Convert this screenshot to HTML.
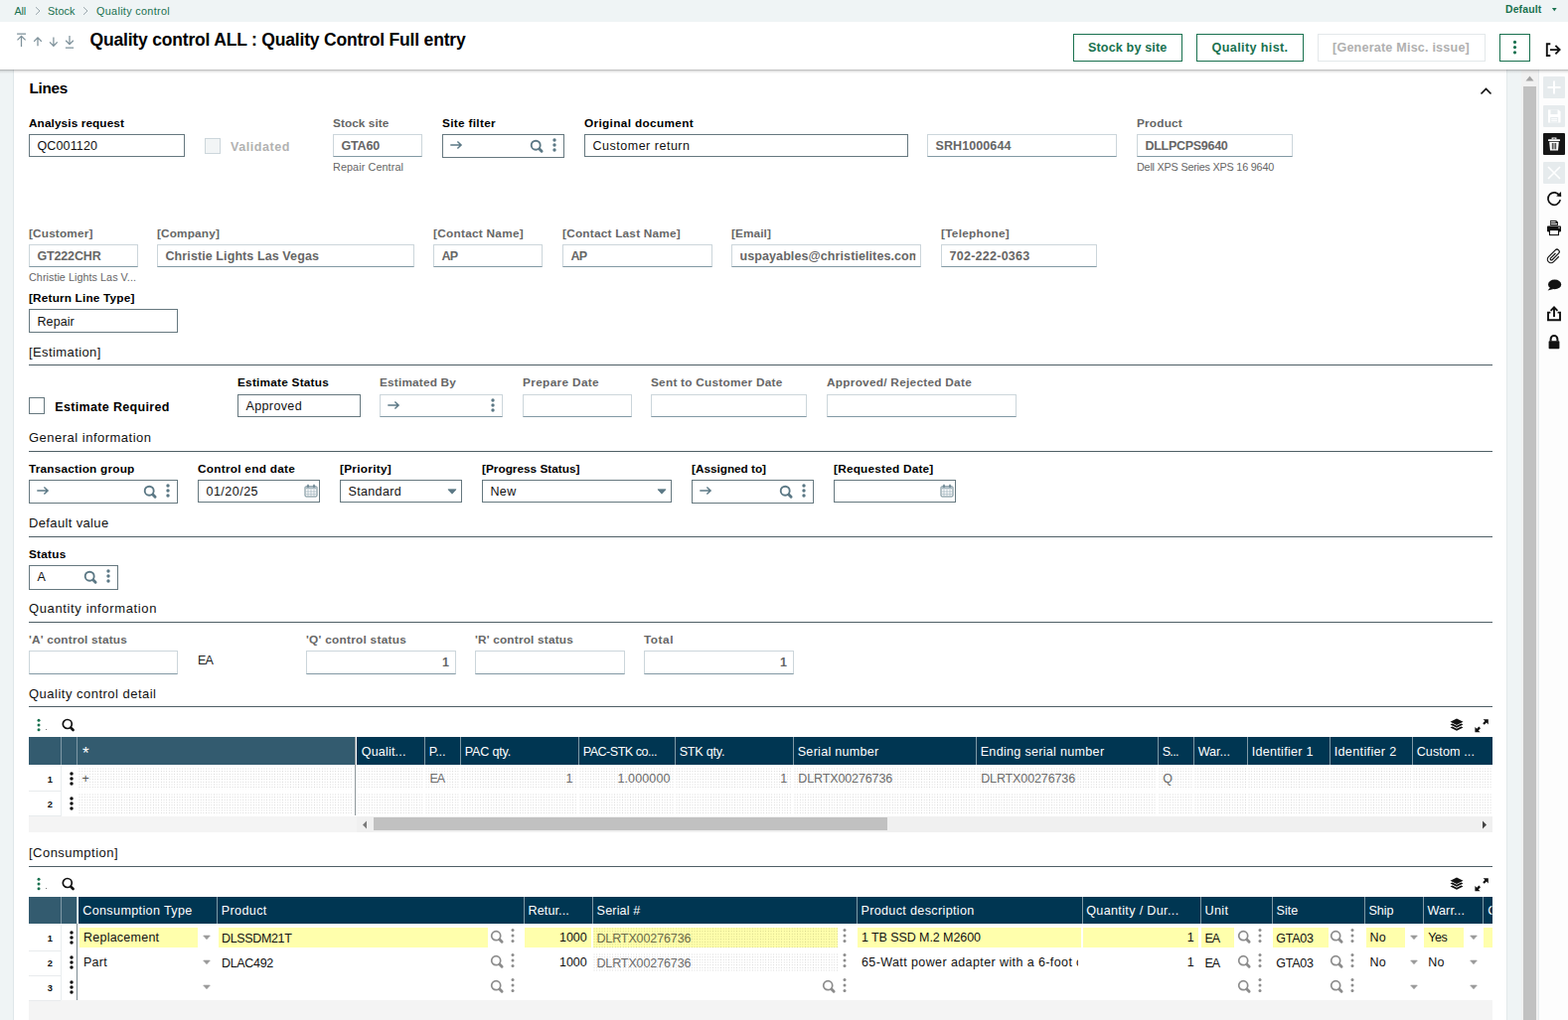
<!DOCTYPE html>
<html lang="en"><head><meta charset="utf-8"><title>Quality control</title>
<style>
html,body{margin:0;padding:0;background:#fff;}
body{width:1578px;height:1027px;overflow:hidden;font-family:"Liberation Sans",sans-serif;}
#root{position:relative;width:1578px;height:1027px;overflow:hidden;background:#fff;}
.w{display:contents;}
.b{position:absolute;box-sizing:border-box;}
.t{position:absolute;white-space:nowrap;}
.ed{border:1px solid #66787f;background:#fff;}
.ro{border:1px solid #ccd6db;border-bottom-color:#8299a4;background:#fff;}
.dots{background-color:#fff;background-image:linear-gradient(90deg,#fff 1.67px,rgba(255,255,255,0) 1.67px),linear-gradient(#fff 1.67px,#d0d0d0 1.67px);background-size:2.667px 2.667px;background-position:-1.2px -1.2px;}

</style></head>
<body>
<div id="root">
<nav class="w" aria-label="Breadcrumb">
<div class="b " style="left:0px;top:0px;width:1578px;height:22px;background:#eff4f5;"></div>
<span class="t " style="top:5px;font-size:10.8px;line-height:12px;color:#19714f;left:14.50px;letter-spacing:-0.167px;">All</span>
<span class="t " style="top:5px;font-size:10.8px;line-height:12px;color:#19714f;left:48.00px;letter-spacing:0.097px;">Stock</span>
<span class="t " style="top:5px;font-size:10.8px;line-height:12px;color:#19714f;left:97.00px;letter-spacing:0.332px;">Quality control</span>
<svg class="b" style="left:34px;top:6px;" width="8" height="10" viewBox="0 0 8 10"><path d="M2 1.2 L6 5 L2 8.8" fill="none" stroke="#9aa7ad" stroke-width="1"/></svg>
<svg class="b" style="left:82px;top:6px;" width="8" height="10" viewBox="0 0 8 10"><path d="M2 1.2 L6 5 L2 8.8" fill="none" stroke="#9aa7ad" stroke-width="1"/></svg>
<span class="t " style="top:4px;font-size:10.4px;line-height:11px;color:#19714f;font-weight:700;left:1515.00px;letter-spacing:0.154px;">Default</span>
<svg class="b" style="left:1561px;top:7px;" width="7" height="6" viewBox="0 0 7 6"><path d="M0.9 0.9 H5.7 L3.3 4.3 Z" fill="#19714f"/></svg>
</nav>
<div class="w">
<div class="b " style="left:0px;top:70px;width:14px;height:957px;background:#eff4f5;border-right:1px solid #dfe6e9;"></div>
<div class="b " style="left:1516px;top:70px;width:15px;height:957px;background:#eff4f5;border-left:1px solid #e3e9eb;"></div>
<div class="b " style="left:1531px;top:70px;width:17px;height:957px;background:#f1f1f1;"></div>
<div class="b " style="left:1533px;top:87px;width:13px;height:940px;background:#c1c1c1;"></div>
<svg class="b" style="left:1535px;top:76px;" width="9" height="6" viewBox="0 0 9 6"><path d="M0.5 5.5 L4.5 0.5 L8.5 5.5 Z" fill="#a3a3a3"/></svg>
<div class="b " style="left:1548px;top:70px;width:30px;height:957px;background:#fdfdfd;border-left:1px solid #e6ebed;"></div>
</div>
<header class="w">
<div class="b " style="left:0px;top:22px;width:1578px;height:48px;background:#fff;"></div>
<div class="b " style="left:0px;top:70px;width:1578px;height:4px;background:linear-gradient(rgba(0,0,0,0.30),rgba(0,0,0,0.10) 40%,rgba(0,0,0,0));"></div>
<svg class="b" style="left:14px;top:32px;" width="64" height="18" viewBox="0 0 64 18"><g stroke="#7f929b" stroke-width="1.25" fill="none"><path d="M3.1 2.2 H12 M7.5 4.3 V14.9 M3.5 8.4 L7.5 4.3 L11.6 8.4"/><path d="M24 5.9 V14.3 M20.2 9.8 L24 5.9 L27.8 9.8"/><path d="M39.9 5.4 V14.2 M36 10.4 L39.9 14.3 L43.7 10.4"/><path d="M51.9 16.2 H60.1 M56 4.1 V12.4 M52.2 8.7 L56 12.6 L59.8 8.7"/></g></svg>
<span class="t " style="top:30px;font-size:17.5px;line-height:20px;color:#000;font-weight:700;left:90.50px;letter-spacing:-0.187px;">Quality control ALL : Quality Control Full entry</span>
<div class="b " style="left:1080px;top:34px;width:110px;height:28px;border:1.5px solid #19714f;background:#fff;"></div>
<span class="t " style="top:41px;font-size:12.6px;line-height:14px;color:#19714f;font-weight:700;left:1095.00px;letter-spacing:0.138px;">Stock by site</span>
<div class="b " style="left:1204px;top:34px;width:108px;height:28px;border:1.5px solid #19714f;background:#fff;"></div>
<span class="t " style="top:41px;font-size:12.6px;line-height:14px;color:#19714f;font-weight:700;left:1219.50px;letter-spacing:0.379px;">Quality hist.</span>
<div class="b " style="left:1326px;top:34px;width:169px;height:28px;border:1px solid #e3e8ea;background:#fff;"></div>
<span class="t " style="top:41px;font-size:12.6px;line-height:14px;color:#b0b0b0;font-weight:700;left:1341.00px;letter-spacing:0.196px;">[Generate Misc. issue]</span>
<div class="b " style="left:1509px;top:34px;width:31px;height:28px;border:1.5px solid #19714f;background:#fff;"></div>
<svg class="b" style="left:1522px;top:40px;" width="5" height="16" viewBox="0 0 5 16"><g fill="#19714f"><circle cx="2.5" cy="2.4" r="1.6"/><circle cx="2.5" cy="7.6" r="1.6"/><circle cx="2.5" cy="12.8" r="1.6"/></g></svg>
<svg class="b" style="left:1554px;top:41px;" width="18" height="18" viewBox="0 0 18 18"><g fill="none" stroke="#111" stroke-width="1.9"><path d="M6.3 3.2 H2.8 V15 H6.3"/><path d="M6 9.1 H15.3 M11.4 4.9 L15.6 9.1 L11.4 13.3"/></g></svg>
</header>
<aside class="w">
<div class="b " style="left:1553px;top:77px;width:22px;height:22px;background:#e6ebed;border-radius:1px;"></div>
<svg class="b" style="left:1553px;top:77px;" width="22" height="22" viewBox="0 0 22 22"><path d="M11 4.5 V17.5 M4.5 11 H17.5" stroke="#fff" stroke-width="2" fill="none"/></svg>
<div class="b " style="left:1553px;top:106px;width:22px;height:22px;background:#e6ebed;border-radius:1px;"></div>
<svg class="b" style="left:1553px;top:106px;" width="22" height="22" viewBox="0 0 22 22"><path d="M5 4.5 H15.5 L17.5 6.5 V17.5 H5 Z" fill="#fff"/><rect x="7.5" y="4.5" width="7" height="4.6" fill="#e6ebed"/><rect x="7.2" y="12" width="8" height="5.5" fill="#e6ebed"/><rect x="8.2" y="13.2" width="6" height="1.1" fill="#fff"/><rect x="8.2" y="15.2" width="6" height="1.1" fill="#fff"/></svg>
<div class="b " style="left:1553px;top:134px;width:22px;height:22px;background:#161616;border-radius:1px;"></div>
<svg class="b" style="left:1553px;top:134px;" width="22" height="22" viewBox="0 0 22 22"><g fill="#fff"><rect x="5" y="6.2" width="12" height="1.8" rx="0.5"/><path d="M8.6 6.3 V4.6 H13.4 V6.3 H12.3 V5.6 H9.7 V6.3 Z"/><path d="M6.2 8.8 H15.8 L15 17.6 H7 Z"/></g><g stroke="#161616" stroke-width="0.9"><path d="M9.3 10 V16.3 M11 10 V16.3 M12.7 10 V16.3"/></g></svg>
<div class="b " style="left:1553px;top:163px;width:22px;height:22px;background:#e6ebed;border-radius:1px;"></div>
<svg class="b" style="left:1553px;top:163px;" width="22" height="22" viewBox="0 0 22 22"><path d="M5 5 L17 17 M17 5 L5 17" stroke="#fff" stroke-width="1.6" fill="none"/></svg>
<svg class="b" style="left:1553px;top:189px;" width="22" height="22" viewBox="0 0 22 22"><path d="M16.6 8.2 A6.2 6.2 0 1 0 17.2 12.2" fill="none" stroke="#111" stroke-width="1.7"/><path d="M13.2 8.6 L18.2 9 L18 4 Z" fill="#111"/></svg>
<svg class="b" style="left:1553px;top:218px;" width="22" height="22" viewBox="0 0 22 22"><g fill="#111"><path d="M7 4 H13.2 L15 5.8 V9 H7 Z"/><rect x="4" y="9.4" width="14" height="6" rx="0.8"/><rect x="6.5" y="13.6" width="9" height="5" fill="#fff" stroke="#111" stroke-width="1.1"/></g><rect x="7.6" y="5" width="5" height="1" fill="#fff"/><rect x="7.6" y="7" width="6.6" height="1" fill="#fff"/><circle cx="16" cy="11.3" r="0.7" fill="#fff"/></svg>
<svg class="b" style="left:1553px;top:247px;" width="22" height="22" viewBox="0 0 22 22"><path d="M9.9 7.4 V14.4 A1.15 1.15 0 0 0 12.2 14.4 V5.4 A2.35 2.35 0 0 0 7.5 5.4 V15 A3.55 3.55 0 0 0 14.6 15 V7.4" fill="none" stroke="#1c1c1c" stroke-width="1.25" transform="rotate(45 11 11) translate(0 0.4)"/></svg>
<svg class="b" style="left:1553px;top:276px;" width="22" height="22" viewBox="0 0 22 22"><ellipse cx="11.6" cy="10.4" rx="6.6" ry="4.9" fill="#111"/><path d="M7.5 13 L4.6 16.6 L10.5 15 Z" fill="#111"/></svg>
<svg class="b" style="left:1553px;top:305px;" width="22" height="22" viewBox="0 0 22 22"><g fill="none" stroke="#111" stroke-width="1.9"><path d="M7.4 9.6 H5 V17.2 H17 V9.6 H14.6"/><path d="M11 14 V4.6 M7.6 7.8 L11 4.4 L14.4 7.8"/></g></svg>
<svg class="b" style="left:1553px;top:333px;" width="22" height="22" viewBox="0 0 22 22"><path d="M7.6 10.5 V8.4 A3.4 3.4 0 0 1 14.4 8.4 V10.5" fill="none" stroke="#111" stroke-width="2"/><rect x="5.6" y="10.2" width="10.8" height="8" rx="0.8" fill="#111"/></svg>
</aside>
<main class="w">
<span class="t " style="top:80px;font-size:15.3px;line-height:17px;color:#000;font-weight:700;left:29.50px;letter-spacing:-0.291px;">Lines</span>
<svg class="b" style="left:1488px;top:86px;" width="15" height="11" viewBox="0 0 15 11"><path d="M2.5 8.5 L7.5 3.5 L12.5 8.5" fill="none" stroke="#111" stroke-width="1.6"/></svg>
<div class="b ed" style="left:29px;top:135px;width:157px;height:23px;"></div>
<span class="t " style="top:117px;font-size:11.8px;line-height:14px;color:#000;font-weight:700;left:29.00px;letter-spacing:0.099px;">Analysis request</span>
<span class="t " style="top:140px;font-size:12.5px;line-height:14px;color:#111;left:37.50px;letter-spacing:0.132px;">QC001120</span>
<div class="b " style="left:206px;top:139px;width:16px;height:16px;border:1px solid #ccd6db;background:#f2f5f6;"></div>
<span class="t " style="top:141px;font-size:12.5px;line-height:14px;color:#b2b2b2;font-weight:700;left:232.00px;letter-spacing:0.568px;">Validated</span>
<div class="b ro" style="left:335px;top:135px;width:90px;height:23px;"></div>
<span class="t " style="top:117px;font-size:11.8px;line-height:14px;color:#666;font-weight:700;left:335.00px;letter-spacing:0.077px;">Stock site</span>
<span class="t " style="top:140px;font-size:12.5px;line-height:14px;color:#666;font-weight:700;left:343.50px;letter-spacing:-0.175px;">GTA60</span>
<span class="t " style="top:162px;font-size:10.8px;line-height:12px;color:#666;left:335.00px;letter-spacing:0.098px;">Repair Central</span>
<div class="b ed" style="left:445px;top:135px;width:123px;height:24px;"></div>
<span class="t " style="top:117px;font-size:11.8px;line-height:14px;color:#000;font-weight:700;left:445.00px;letter-spacing:0.320px;">Site filter</span>
<svg class="b" style="left:452.5px;top:141.3px;" width="13" height="10" viewBox="0 0 13 10"><path d="M0.3 5 H11 M7.4 1.5 L11.1 5 L7.4 8.5" fill="none" stroke="#5b7885" stroke-width="1.45"/></svg>
<svg class="b" style="left:531.6px;top:138.9px;" width="16" height="16" viewBox="0 0 16 16"><circle cx="7.2" cy="7.2" r="4.5" fill="none" stroke="#5b7885" stroke-width="1.85"/><path d="M10.9 11 L13.1 13.2" stroke="#5b7885" stroke-width="2.9" stroke-linecap="round"/></svg>
<svg class="b" style="left:555.4px;top:138.3px;" width="6" height="16" viewBox="0 0 6 16"><g fill="#5b7885"><circle cx="3" cy="3.05" r="1.7"/><circle cx="3" cy="8" r="1.7"/><circle cx="3" cy="12.95" r="1.7"/></g></svg>
<div class="b ed" style="left:588px;top:135px;width:326px;height:23px;"></div>
<span class="t " style="top:117px;font-size:11.8px;line-height:14px;color:#000;font-weight:700;left:588.00px;letter-spacing:0.340px;">Original document</span>
<span class="t " style="top:140px;font-size:12.5px;line-height:14px;color:#111;left:596.50px;letter-spacing:0.512px;">Customer return</span>
<div class="b ro" style="left:933px;top:135px;width:191px;height:23px;"></div>
<span class="t " style="top:140px;font-size:12.5px;line-height:14px;color:#666;font-weight:700;left:941.50px;letter-spacing:0.094px;">SRH1000644</span>
<div class="b ro" style="left:1144px;top:135px;width:157px;height:23px;"></div>
<span class="t " style="top:117px;font-size:11.8px;line-height:14px;color:#666;font-weight:700;left:1144.00px;letter-spacing:0.203px;">Product</span>
<span class="t " style="top:140px;font-size:12.5px;line-height:14px;color:#666;font-weight:700;left:1152.50px;letter-spacing:-0.287px;">DLLPCPS9640</span>
<span class="t " style="top:162px;font-size:10.8px;line-height:12px;color:#666;left:1144.00px;letter-spacing:-0.202px;">Dell XPS Series XPS 16 9640</span>
<div class="b ro" style="left:29px;top:246px;width:110px;height:23px;"></div>
<span class="t " style="top:228px;font-size:11.8px;line-height:14px;color:#666;font-weight:700;left:29.00px;letter-spacing:0.158px;">[Customer]</span>
<span class="t " style="top:251px;font-size:12.5px;line-height:14px;color:#666;font-weight:700;left:37.50px;letter-spacing:-0.162px;">GT222CHR</span>
<span class="t " style="top:273px;font-size:10.8px;line-height:12px;color:#666;left:29.00px;letter-spacing:0.040px;">Christie Lights Las V...</span>
<div class="b ro" style="left:158px;top:246px;width:259px;height:23px;"></div>
<span class="t " style="top:228px;font-size:11.8px;line-height:14px;color:#666;font-weight:700;left:158.00px;letter-spacing:0.155px;">[Company]</span>
<span class="t " style="top:251px;font-size:12.5px;line-height:14px;color:#666;font-weight:700;left:166.50px;letter-spacing:0.094px;">Christie Lights Las Vegas</span>
<div class="b ro" style="left:436px;top:246px;width:110px;height:23px;"></div>
<span class="t " style="top:228px;font-size:11.8px;line-height:14px;color:#666;font-weight:700;left:436.00px;letter-spacing:0.272px;">[Contact Name]</span>
<span class="t " style="top:251px;font-size:12.5px;line-height:14px;color:#666;font-weight:700;left:444.50px;letter-spacing:-0.688px;">AP</span>
<div class="b ro" style="left:566px;top:246px;width:151px;height:23px;"></div>
<span class="t " style="top:228px;font-size:11.8px;line-height:14px;color:#666;font-weight:700;left:566.00px;letter-spacing:0.225px;">[Contact Last Name]</span>
<span class="t " style="top:251px;font-size:12.5px;line-height:14px;color:#666;font-weight:700;left:574.50px;letter-spacing:-0.688px;">AP</span>
<div class="b ro" style="left:736px;top:246px;width:191px;height:23px;"></div>
<span class="t " style="top:228px;font-size:11.8px;line-height:14px;color:#666;font-weight:700;left:736.00px;letter-spacing:0.094px;">[Email]</span>
<span class="t " style="top:251px;font-size:12.5px;line-height:14px;color:#666;font-weight:700;left:744.50px;letter-spacing:0.092px;clip-path:inset(-2px 4.6px -2px 0);">uspayables@christielites.com</span>
<div class="b ro" style="left:947px;top:246px;width:157px;height:23px;"></div>
<span class="t " style="top:228px;font-size:11.8px;line-height:14px;color:#666;font-weight:700;left:947.00px;letter-spacing:0.274px;">[Telephone]</span>
<span class="t " style="top:251px;font-size:12.5px;line-height:14px;color:#666;font-weight:700;left:955.50px;letter-spacing:0.262px;">702-222-0363</span>
<div class="b ed" style="left:29px;top:311px;width:150px;height:24px;"></div>
<span class="t " style="top:293px;font-size:11.8px;line-height:14px;color:#000;font-weight:700;left:29.00px;letter-spacing:0.175px;">[Return Line Type]</span>
<span class="t " style="top:317px;font-size:12.5px;line-height:14px;color:#111;left:37.50px;letter-spacing:0.079px;">Repair</span>
<span class="t " style="top:347px;font-size:13px;line-height:15px;color:#111;left:29.00px;letter-spacing:0.398px;">[Estimation]</span>
<div class="b " style="left:29px;top:367px;width:1473px;height:1px;background:#4f5f66;"></div>
<div class="b " style="left:29px;top:400px;width:16px;height:17px;border:1px solid #66787f;background:#fff;"></div>
<span class="t " style="top:403px;font-size:12.5px;line-height:14px;color:#000;font-weight:700;left:55.30px;letter-spacing:0.337px;">Estimate Required</span>
<div class="b ed" style="left:239px;top:397px;width:124px;height:23px;"></div>
<span class="t " style="top:378px;font-size:11.8px;line-height:14px;color:#000;font-weight:700;left:239.00px;letter-spacing:0.232px;">Estimate Status</span>
<span class="t " style="top:402px;font-size:12.5px;line-height:14px;color:#111;left:247.50px;letter-spacing:0.373px;">Approved</span>
<div class="b ro" style="left:382px;top:397px;width:124px;height:23px;"></div>
<span class="t " style="top:378px;font-size:11.8px;line-height:14px;color:#666;font-weight:700;left:382.00px;letter-spacing:0.188px;">Estimated By</span>
<svg class="b" style="left:389.5px;top:403.3px;" width="13" height="10" viewBox="0 0 13 10"><path d="M0.3 5 H11 M7.4 1.5 L11.1 5 L7.4 8.5" fill="none" stroke="#5b7885" stroke-width="1.45"/></svg>
<svg class="b" style="left:493.4px;top:400.3px;" width="6" height="16" viewBox="0 0 6 16"><g fill="#5b7885"><circle cx="3" cy="3.05" r="1.7"/><circle cx="3" cy="8" r="1.7"/><circle cx="3" cy="12.95" r="1.7"/></g></svg>
<div class="b ro" style="left:526px;top:397px;width:110px;height:23px;"></div>
<span class="t " style="top:378px;font-size:11.8px;line-height:14px;color:#666;font-weight:700;left:526.00px;letter-spacing:0.350px;">Prepare Date</span>
<div class="b ro" style="left:655px;top:397px;width:157px;height:23px;"></div>
<span class="t " style="top:378px;font-size:11.8px;line-height:14px;color:#666;font-weight:700;left:655.00px;letter-spacing:0.254px;">Sent to Customer Date</span>
<div class="b ro" style="left:832px;top:397px;width:191px;height:23px;"></div>
<span class="t " style="top:378px;font-size:11.8px;line-height:14px;color:#666;font-weight:700;left:832.00px;letter-spacing:0.276px;">Approved/ Rejected Date</span>
<span class="t " style="top:433px;font-size:13px;line-height:15px;color:#111;left:29.00px;letter-spacing:0.491px;">General information</span>
<div class="b " style="left:29px;top:454px;width:1473px;height:1px;background:#4f5f66;"></div>
<div class="b ed" style="left:29px;top:483px;width:150px;height:24px;"></div>
<span class="t " style="top:465px;font-size:11.8px;line-height:14px;color:#000;font-weight:700;left:29.00px;letter-spacing:0.211px;">Transaction group</span>
<svg class="b" style="left:36.5px;top:489.3px;" width="13" height="10" viewBox="0 0 13 10"><path d="M0.3 5 H11 M7.4 1.5 L11.1 5 L7.4 8.5" fill="none" stroke="#5b7885" stroke-width="1.45"/></svg>
<svg class="b" style="left:142.6px;top:486.90000000000003px;" width="16" height="16" viewBox="0 0 16 16"><circle cx="7.2" cy="7.2" r="4.5" fill="none" stroke="#5b7885" stroke-width="1.85"/><path d="M10.9 11 L13.1 13.2" stroke="#5b7885" stroke-width="2.9" stroke-linecap="round"/></svg>
<svg class="b" style="left:166.4px;top:486.3px;" width="6" height="16" viewBox="0 0 6 16"><g fill="#5b7885"><circle cx="3" cy="3.05" r="1.7"/><circle cx="3" cy="8" r="1.7"/><circle cx="3" cy="12.95" r="1.7"/></g></svg>
<div class="b ed" style="left:199px;top:483px;width:123px;height:23px;"></div>
<span class="t " style="top:465px;font-size:11.8px;line-height:14px;color:#000;font-weight:700;left:199.00px;letter-spacing:0.268px;">Control end date</span>
<span class="t " style="top:488px;font-size:12.5px;line-height:14px;color:#111;left:207.50px;letter-spacing:0.479px;">01/20/25</span>
<svg class="b" style="left:305.5px;top:487.3px;" width="14" height="14" viewBox="0 0 14 14"><rect x="1" y="2.8" width="12" height="10.2" rx="1" fill="#fff" stroke="#5b7885" stroke-width="0.9"/><rect x="1.4" y="3.2" width="11.2" height="2.2" fill="#a9bac2"/><path d="M4 0.8 V3.8 M10 0.8 V3.8" stroke="#5b7885" stroke-width="1.4"/><path d="M1.5 8 H12.5 M1.5 10.5 H12.5 M4 5.6 V12.6 M7 5.6 V12.6 M10 5.6 V12.6" stroke="#9fb2bb" stroke-width="0.7"/></svg>
<div class="b ed" style="left:342px;top:483px;width:123px;height:23px;"></div>
<span class="t " style="top:465px;font-size:11.8px;line-height:14px;color:#000;font-weight:700;left:342.00px;letter-spacing:0.283px;">[Priority]</span>
<span class="t " style="top:488px;font-size:12.5px;line-height:14px;color:#111;left:350.50px;letter-spacing:0.346px;">Standard</span>
<svg class="b" style="left:450px;top:491.7px;" width="10" height="6" viewBox="0 0 10 6"><path d="M1 0.8 H9 L5 5.2 Z" fill="#5b7885" stroke="#5b7885" stroke-width="0.8" stroke-linejoin="round"/></svg>
<div class="b ed" style="left:485px;top:483px;width:191px;height:23px;"></div>
<span class="t " style="top:465px;font-size:11.8px;line-height:14px;color:#000;font-weight:700;left:485.00px;letter-spacing:0.009px;">[Progress Status]</span>
<span class="t " style="top:488px;font-size:12.5px;line-height:14px;color:#111;left:493.50px;letter-spacing:0.328px;">New</span>
<svg class="b" style="left:661px;top:491.7px;" width="10" height="6" viewBox="0 0 10 6"><path d="M1 0.8 H9 L5 5.2 Z" fill="#5b7885" stroke="#5b7885" stroke-width="0.8" stroke-linejoin="round"/></svg>
<div class="b ed" style="left:696px;top:483px;width:123px;height:24px;"></div>
<span class="t " style="top:465px;font-size:11.8px;line-height:14px;color:#000;font-weight:700;left:696.00px;letter-spacing:-0.029px;">[Assigned to]</span>
<svg class="b" style="left:703.5px;top:489.3px;" width="13" height="10" viewBox="0 0 13 10"><path d="M0.3 5 H11 M7.4 1.5 L11.1 5 L7.4 8.5" fill="none" stroke="#5b7885" stroke-width="1.45"/></svg>
<svg class="b" style="left:782.6px;top:486.90000000000003px;" width="16" height="16" viewBox="0 0 16 16"><circle cx="7.2" cy="7.2" r="4.5" fill="none" stroke="#5b7885" stroke-width="1.85"/><path d="M10.9 11 L13.1 13.2" stroke="#5b7885" stroke-width="2.9" stroke-linecap="round"/></svg>
<svg class="b" style="left:806.4px;top:486.3px;" width="6" height="16" viewBox="0 0 6 16"><g fill="#5b7885"><circle cx="3" cy="3.05" r="1.7"/><circle cx="3" cy="8" r="1.7"/><circle cx="3" cy="12.95" r="1.7"/></g></svg>
<div class="b ed" style="left:839px;top:483px;width:123px;height:23px;"></div>
<span class="t " style="top:465px;font-size:11.8px;line-height:14px;color:#000;font-weight:700;left:839.00px;letter-spacing:0.218px;">[Requested Date]</span>
<svg class="b" style="left:945.5px;top:487.3px;" width="14" height="14" viewBox="0 0 14 14"><rect x="1" y="2.8" width="12" height="10.2" rx="1" fill="#fff" stroke="#5b7885" stroke-width="0.9"/><rect x="1.4" y="3.2" width="11.2" height="2.2" fill="#a9bac2"/><path d="M4 0.8 V3.8 M10 0.8 V3.8" stroke="#5b7885" stroke-width="1.4"/><path d="M1.5 8 H12.5 M1.5 10.5 H12.5 M4 5.6 V12.6 M7 5.6 V12.6 M10 5.6 V12.6" stroke="#9fb2bb" stroke-width="0.7"/></svg>
<span class="t " style="top:519px;font-size:13px;line-height:15px;color:#111;left:29.00px;letter-spacing:0.355px;">Default value</span>
<div class="b " style="left:29px;top:540px;width:1473px;height:1px;background:#4f5f66;"></div>
<div class="b ed" style="left:29px;top:569px;width:90px;height:25px;"></div>
<span class="t " style="top:551px;font-size:11.8px;line-height:14px;color:#000;font-weight:700;left:29.00px;letter-spacing:0.240px;">Status</span>
<span class="t " style="top:574px;font-size:12.5px;line-height:14px;color:#111;left:37.50px;letter-spacing:0.156px;">A</span>
<svg class="b" style="left:82.6px;top:572.9px;" width="16" height="16" viewBox="0 0 16 16"><circle cx="7.2" cy="7.2" r="4.5" fill="none" stroke="#5b7885" stroke-width="1.85"/><path d="M10.9 11 L13.1 13.2" stroke="#5b7885" stroke-width="2.9" stroke-linecap="round"/></svg>
<svg class="b" style="left:106.4px;top:572.3px;" width="6" height="16" viewBox="0 0 6 16"><g fill="#5b7885"><circle cx="3" cy="3.05" r="1.7"/><circle cx="3" cy="8" r="1.7"/><circle cx="3" cy="12.95" r="1.7"/></g></svg>
<span class="t " style="top:605px;font-size:13px;line-height:15px;color:#111;left:29.00px;letter-spacing:0.633px;">Quantity information</span>
<div class="b " style="left:29px;top:626px;width:1473px;height:1px;background:#4f5f66;"></div>
<div class="b ro" style="left:29px;top:655px;width:150px;height:24px;"></div>
<span class="t " style="top:637px;font-size:11.8px;line-height:14px;color:#666;font-weight:700;left:29.00px;letter-spacing:0.200px;">&#x27;A&#x27; control status</span>
<span class="t " style="top:658px;font-size:12.5px;line-height:14px;color:#222;left:199.00px;letter-spacing:-0.844px;">EA</span>
<div class="b ro" style="left:308px;top:655px;width:151px;height:24px;"></div>
<span class="t " style="top:637px;font-size:11.8px;line-height:14px;color:#666;font-weight:700;left:308.00px;letter-spacing:0.273px;">&#x27;Q&#x27; control status</span>
<span class="t " style="top:660px;font-size:12.5px;line-height:14px;color:#666;font-weight:700;right:1126.50px;letter-spacing:-0.380px;">1</span>
<div class="b ro" style="left:478px;top:655px;width:151px;height:24px;"></div>
<span class="t " style="top:637px;font-size:11.8px;line-height:14px;color:#666;font-weight:700;left:478.00px;letter-spacing:0.200px;">&#x27;R&#x27; control status</span>
<div class="b ro" style="left:648px;top:655px;width:151px;height:24px;"></div>
<span class="t " style="top:637px;font-size:11.8px;line-height:14px;color:#666;font-weight:700;left:648.00px;letter-spacing:0.537px;">Total</span>
<span class="t " style="top:660px;font-size:12.5px;line-height:14px;color:#666;font-weight:700;right:786.50px;letter-spacing:-0.380px;">1</span>
<span class="t " style="top:691px;font-size:13px;line-height:15px;color:#111;left:29.00px;letter-spacing:0.487px;">Quality control detail</span>
<div class="b " style="left:29px;top:711px;width:1473px;height:1px;background:#4f5f66;"></div>
<span class="t " style="top:851px;font-size:13px;line-height:15px;color:#111;left:29.00px;letter-spacing:0.475px;">[Consumption]</span>
<div class="b " style="left:29px;top:872px;width:1473px;height:1px;background:#4f5f66;"></div>
<svg class="b" style="left:36px;top:721.5px;" width="6" height="16" viewBox="0 0 6 16"><g fill="#19714f"><circle cx="3" cy="3.1500000000000004" r="1.5"/><circle cx="3" cy="8" r="1.5"/><circle cx="3" cy="12.85" r="1.5"/></g></svg>
<div class="b " style="left:45.5px;top:733.8px;width:1.0px;height:1.0px;background:#777;"></div>
<svg class="b" style="left:61px;top:721.5px;" width="16" height="16" viewBox="0 0 16 16"><circle cx="6.8" cy="7" r="4.5" fill="none" stroke="#111" stroke-width="1.7"/><path d="M10.2 10.6 L12.6 13" stroke="#111" stroke-width="2.6" stroke-linecap="round"/></svg>
<svg class="b" style="left:1458px;top:721.5px;" width="16" height="16" viewBox="0 0 16 16"><g fill="#111"><path d="M8 1.5 L14.5 4.7 L8 7.9 L1.5 4.7 Z"/><path d="M1.5 7.6 L3.6 6.6 L8 8.8 L12.4 6.6 L14.5 7.6 L8 10.8 Z"/><path d="M1.5 10.5 L3.6 9.5 L8 11.7 L12.4 9.5 L14.5 10.5 L8 13.7 Z"/></g></svg>
<svg class="b" style="left:1483px;top:722.5px;" width="16" height="16" viewBox="0 0 16 16"><g fill="#111"><path d="M9.6 1.2 H14.8 V6.4 L13 4.6 L10.8 6.8 L9.2 5.2 L11.4 3 Z"/><path d="M6.6 14.2 H1.4 V9 L3.2 10.8 L5.4 8.6 L7 10.2 L4.8 12.4 Z"/></g></svg>
<div class="b " style="left:29px;top:742px;width:328px;height:28px;background:#335b6f;"></div>
<div class="b " style="left:61px;top:742px;width:1px;height:28px;background:#7f99a6;"></div>
<div class="b " style="left:77px;top:742px;width:1px;height:28px;background:#7f99a6;"></div>
<div class="b " style="left:357px;top:742px;width:1px;height:79px;background:#8f989c;"></div>
<div class="b " style="left:359px;top:742px;width:1143px;height:28px;background:#003652;"></div>
<span class="t " style="top:749px;font-size:17px;line-height:19px;color:#fff;left:83.00px;letter-spacing:0.000px;">*</span>
<span class="t " style="top:750px;font-size:12.6px;line-height:14px;color:#fff;left:363.70px;letter-spacing:0.166px;">Qualit...</span>
<div class="b " style="left:427px;top:742px;width:1px;height:28px;background:#7f99a6;"></div>
<span class="t " style="top:750px;font-size:12.6px;line-height:14px;color:#fff;left:431.70px;letter-spacing:-0.195px;">P...</span>
<div class="b " style="left:463px;top:742px;width:1px;height:28px;background:#7f99a6;"></div>
<span class="t " style="top:750px;font-size:12.6px;line-height:14px;color:#fff;left:467.70px;letter-spacing:-0.179px;">PAC qty.</span>
<div class="b " style="left:582px;top:742px;width:1px;height:28px;background:#7f99a6;"></div>
<span class="t " style="top:750px;font-size:12.6px;line-height:14px;color:#fff;left:586.70px;letter-spacing:-0.512px;">PAC-STK co...</span>
<div class="b " style="left:679px;top:742px;width:1px;height:28px;background:#7f99a6;"></div>
<span class="t " style="top:750px;font-size:12.6px;line-height:14px;color:#fff;left:683.70px;letter-spacing:-0.220px;">STK qty.</span>
<div class="b " style="left:798px;top:742px;width:1px;height:28px;background:#7f99a6;"></div>
<span class="t " style="top:750px;font-size:12.6px;line-height:14px;color:#fff;left:802.70px;letter-spacing:0.269px;">Serial number</span>
<div class="b " style="left:982px;top:742px;width:1px;height:28px;background:#7f99a6;"></div>
<span class="t " style="top:750px;font-size:12.6px;line-height:14px;color:#fff;left:986.70px;letter-spacing:0.284px;">Ending serial number</span>
<div class="b " style="left:1165px;top:742px;width:1px;height:28px;background:#7f99a6;"></div>
<span class="t " style="top:750px;font-size:12.6px;line-height:14px;color:#fff;left:1169.70px;letter-spacing:-0.727px;">S...</span>
<div class="b " style="left:1201px;top:742px;width:1px;height:28px;background:#7f99a6;"></div>
<span class="t " style="top:750px;font-size:12.6px;line-height:14px;color:#fff;left:1205.70px;letter-spacing:-0.004px;">War...</span>
<div class="b " style="left:1255px;top:742px;width:1px;height:28px;background:#7f99a6;"></div>
<span class="t " style="top:750px;font-size:12.6px;line-height:14px;color:#fff;left:1259.70px;letter-spacing:0.274px;">Identifier 1</span>
<div class="b " style="left:1338px;top:742px;width:1px;height:28px;background:#7f99a6;"></div>
<span class="t " style="top:750px;font-size:12.6px;line-height:14px;color:#fff;left:1342.70px;letter-spacing:0.341px;">Identifier 2</span>
<div class="b " style="left:1421px;top:742px;width:1px;height:28px;background:#7f99a6;"></div>
<span class="t " style="top:750px;font-size:12.6px;line-height:14px;color:#fff;left:1425.70px;letter-spacing:0.091px;">Custom ...</span>
<div class="b dots" style="left:79px;top:773px;width:276px;height:22px;"></div>
<div class="b dots" style="left:360px;top:773px;width:65.5px;height:22px;"></div>
<div class="b dots" style="left:428px;top:773px;width:33.5px;height:22px;"></div>
<div class="b dots" style="left:464px;top:773px;width:116.5px;height:22px;"></div>
<div class="b dots" style="left:583px;top:773px;width:94.5px;height:22px;"></div>
<div class="b dots" style="left:680px;top:773px;width:116.5px;height:22px;"></div>
<div class="b dots" style="left:799px;top:773px;width:181.5px;height:22px;"></div>
<div class="b dots" style="left:983px;top:773px;width:180.5px;height:22px;"></div>
<div class="b dots" style="left:1166px;top:773px;width:33.5px;height:22px;"></div>
<div class="b dots" style="left:1202px;top:773px;width:51.5px;height:22px;"></div>
<div class="b dots" style="left:1256px;top:773px;width:80.5px;height:22px;"></div>
<div class="b dots" style="left:1339px;top:773px;width:80.5px;height:22px;"></div>
<div class="b dots" style="left:1422px;top:773px;width:78.5px;height:22px;"></div>
<div class="b dots" style="left:79px;top:799px;width:276px;height:22px;"></div>
<div class="b dots" style="left:360px;top:799px;width:65.5px;height:22px;"></div>
<div class="b dots" style="left:428px;top:799px;width:33.5px;height:22px;"></div>
<div class="b dots" style="left:464px;top:799px;width:116.5px;height:22px;"></div>
<div class="b dots" style="left:583px;top:799px;width:94.5px;height:22px;"></div>
<div class="b dots" style="left:680px;top:799px;width:116.5px;height:22px;"></div>
<div class="b dots" style="left:799px;top:799px;width:181.5px;height:22px;"></div>
<div class="b dots" style="left:983px;top:799px;width:180.5px;height:22px;"></div>
<div class="b dots" style="left:1166px;top:799px;width:33.5px;height:22px;"></div>
<div class="b dots" style="left:1202px;top:799px;width:51.5px;height:22px;"></div>
<div class="b dots" style="left:1256px;top:799px;width:80.5px;height:22px;"></div>
<div class="b dots" style="left:1339px;top:799px;width:80.5px;height:22px;"></div>
<div class="b dots" style="left:1422px;top:799px;width:78.5px;height:22px;"></div>
<div class="b " style="left:29px;top:796px;width:32px;height:1px;background:#e8ebed;"></div>
<div class="b " style="left:29px;top:821px;width:32px;height:1px;background:#e8ebed;"></div>
<div class="b " style="left:61px;top:770px;width:1px;height:52px;background:#eaedef;"></div>
<span class="t " style="top:780px;font-size:9.3px;line-height:10px;color:#111;font-weight:700;right:1525.00px;letter-spacing:0.000px;">1</span>
<span class="t " style="top:805px;font-size:9.3px;line-height:10px;color:#111;font-weight:700;right:1525.00px;letter-spacing:0.000px;">2</span>
<svg class="b" style="left:69px;top:775.9px;" width="6" height="16" viewBox="0 0 6 16"><g fill="#111"><circle cx="3" cy="3.0999999999999996" r="1.75"/><circle cx="3" cy="8" r="1.75"/><circle cx="3" cy="12.9" r="1.75"/></g></svg>
<svg class="b" style="left:69px;top:801.4px;" width="6" height="16" viewBox="0 0 6 16"><g fill="#111"><circle cx="3" cy="3.0999999999999996" r="1.75"/><circle cx="3" cy="8" r="1.75"/><circle cx="3" cy="12.9" r="1.75"/></g></svg>
<span class="t " style="top:777px;font-size:12.5px;line-height:14px;color:#555;left:82.50px;letter-spacing:0.000px;">+</span>
<span class="t " style="top:777px;font-size:12.5px;line-height:14px;color:#6b6b6b;left:432.40px;letter-spacing:-0.994px;">EA</span>
<span class="t " style="top:777px;font-size:12.5px;line-height:14px;color:#6b6b6b;right:1001.50px;letter-spacing:0.000px;">1</span>
<span class="t " style="top:777px;font-size:12.5px;line-height:14px;color:#6b6b6b;right:903.40px;letter-spacing:0.132px;">1.000000</span>
<span class="t " style="top:777px;font-size:12.5px;line-height:14px;color:#6b6b6b;right:785.70px;letter-spacing:0.000px;">1</span>
<span class="t " style="top:777px;font-size:12.5px;line-height:14px;color:#6b6b6b;left:803.30px;letter-spacing:-0.121px;">DLRTX00276736</span>
<span class="t " style="top:777px;font-size:12.5px;line-height:14px;color:#6b6b6b;left:987.20px;letter-spacing:-0.121px;">DLRTX00276736</span>
<span class="t " style="top:777px;font-size:12.5px;line-height:14px;color:#6b6b6b;left:1170.30px;letter-spacing:0.000px;">Q</span>
<div class="b " style="left:29px;top:822px;width:330px;height:16px;background:#f4f4f4;"></div>
<div class="b " style="left:359px;top:822px;width:1143px;height:16px;background:#f0f0f0;"></div>
<div class="b " style="left:376px;top:823px;width:517px;height:13px;background:#c1c1c1;"></div>
<svg class="b" style="left:364px;top:826px;" width="6" height="9" viewBox="0 0 6 9"><path d="M5 0.5 L1 4.5 L5 8.5 Z" fill="#7a7a7a"/></svg>
<svg class="b" style="left:1491px;top:826px;" width="6" height="9" viewBox="0 0 6 9"><path d="M1 0.5 L5 4.5 L1 8.5 Z" fill="#444"/></svg>
<svg class="b" style="left:36px;top:881.5px;" width="6" height="16" viewBox="0 0 6 16"><g fill="#19714f"><circle cx="3" cy="3.1500000000000004" r="1.5"/><circle cx="3" cy="8" r="1.5"/><circle cx="3" cy="12.85" r="1.5"/></g></svg>
<div class="b " style="left:45.5px;top:893.8px;width:1.0px;height:1.0px;background:#777;"></div>
<svg class="b" style="left:61px;top:881.5px;" width="16" height="16" viewBox="0 0 16 16"><circle cx="6.8" cy="7" r="4.5" fill="none" stroke="#111" stroke-width="1.7"/><path d="M10.2 10.6 L12.6 13" stroke="#111" stroke-width="2.6" stroke-linecap="round"/></svg>
<svg class="b" style="left:1458px;top:881.5px;" width="16" height="16" viewBox="0 0 16 16"><g fill="#111"><path d="M8 1.5 L14.5 4.7 L8 7.9 L1.5 4.7 Z"/><path d="M1.5 7.6 L3.6 6.6 L8 8.8 L12.4 6.6 L14.5 7.6 L8 10.8 Z"/><path d="M1.5 10.5 L3.6 9.5 L8 11.7 L12.4 9.5 L14.5 10.5 L8 13.7 Z"/></g></svg>
<svg class="b" style="left:1483px;top:882.5px;" width="16" height="16" viewBox="0 0 16 16"><g fill="#111"><path d="M9.6 1.2 H14.8 V6.4 L13 4.6 L10.8 6.8 L9.2 5.2 L11.4 3 Z"/><path d="M6.6 14.2 H1.4 V9 L3.2 10.8 L5.4 8.6 L7 10.2 L4.8 12.4 Z"/></g></svg>
<div class="b " style="left:29px;top:902.5px;width:49px;height:27.5px;background:#335b6f;"></div>
<div class="b " style="left:61px;top:902.5px;width:1px;height:27.5px;background:#7f99a6;"></div>
<div class="b " style="left:77.2px;top:902.5px;width:1.0999999999999943px;height:27.5px;background:#c5d0d6;"></div>
<div class="b " style="left:77.4px;top:930px;width:1.0px;height:77px;background:#7c8b92;"></div>
<div class="b " style="left:79px;top:902.5px;width:1423px;height:27.5px;background:#003652;"></div>
<span class="t " style="top:910px;font-size:12.6px;line-height:14px;color:#fff;left:83.20px;letter-spacing:0.357px;">Consumption Type</span>
<div class="b " style="left:218.0px;top:902.5px;width:1.0px;height:27.5px;background:#7f99a6;"></div>
<span class="t " style="top:910px;font-size:12.6px;line-height:14px;color:#fff;left:222.70px;letter-spacing:0.371px;">Product</span>
<div class="b " style="left:526.9px;top:902.5px;width:1.0px;height:27.5px;background:#7f99a6;"></div>
<span class="t " style="top:910px;font-size:12.6px;line-height:14px;color:#fff;left:531.60px;letter-spacing:0.086px;">Retur...</span>
<div class="b " style="left:595.9px;top:902.5px;width:1.0px;height:27.5px;background:#7f99a6;"></div>
<span class="t " style="top:910px;font-size:12.6px;line-height:14px;color:#fff;left:600.60px;letter-spacing:0.150px;">Serial #</span>
<div class="b " style="left:861.7px;top:902.5px;width:1.0px;height:27.5px;background:#7f99a6;"></div>
<span class="t " style="top:910px;font-size:12.6px;line-height:14px;color:#fff;left:866.40px;letter-spacing:0.341px;">Product description</span>
<div class="b " style="left:1088.5px;top:902.5px;width:1.0px;height:27.5px;background:#7f99a6;"></div>
<span class="t " style="top:910px;font-size:12.6px;line-height:14px;color:#fff;left:1093.20px;letter-spacing:0.341px;">Quantity / Dur...</span>
<div class="b " style="left:1207.7px;top:902.5px;width:1.0px;height:27.5px;background:#7f99a6;"></div>
<span class="t " style="top:910px;font-size:12.6px;line-height:14px;color:#fff;left:1212.40px;letter-spacing:0.398px;">Unit</span>
<div class="b " style="left:1279.8px;top:902.5px;width:1.0px;height:27.5px;background:#7f99a6;"></div>
<span class="t " style="top:910px;font-size:12.6px;line-height:14px;color:#fff;left:1284.50px;letter-spacing:-0.001px;">Site</span>
<div class="b " style="left:1372.8px;top:902.5px;width:1.0px;height:27.5px;background:#7f99a6;"></div>
<span class="t " style="top:910px;font-size:12.6px;line-height:14px;color:#fff;left:1377.50px;letter-spacing:-0.105px;">Ship</span>
<div class="b " style="left:1431.7px;top:902.5px;width:1.0px;height:27.5px;background:#7f99a6;"></div>
<span class="t " style="top:910px;font-size:12.6px;line-height:14px;color:#fff;left:1436.40px;letter-spacing:0.154px;">Warr...</span>
<div class="b " style="left:1492.4px;top:902.5px;width:1.0px;height:27.5px;background:#7f99a6;"></div>
<span class="t " style="top:910px;font-size:12.6px;line-height:14px;color:#fff;left:1497.20px;letter-spacing:0.000px;clip-path:inset(0 4.8px 0 0);">C</span>
<div class="b " style="left:29px;top:1007px;width:1473px;height:20px;background:#f4f4f4;"></div>
<div class="b " style="left:29px;top:957px;width:32px;height:1px;background:#e8ebed;"></div>
<div class="b " style="left:29px;top:982px;width:32px;height:1px;background:#e8ebed;"></div>
<div class="b " style="left:29px;top:1007px;width:32px;height:1px;background:#e8ebed;"></div>
<div class="b " style="left:61px;top:930px;width:1px;height:77px;background:#eaedef;"></div>
<span class="t " style="top:940px;font-size:9.3px;line-height:10px;color:#111;font-weight:700;right:1525.00px;letter-spacing:0.000px;">1</span>
<svg class="b" style="left:69px;top:936.4px;" width="6" height="16" viewBox="0 0 6 16"><g fill="#111"><circle cx="3" cy="3.0999999999999996" r="1.75"/><circle cx="3" cy="8" r="1.75"/><circle cx="3" cy="12.9" r="1.75"/></g></svg>
<span class="t " style="top:965px;font-size:9.3px;line-height:10px;color:#111;font-weight:700;right:1525.00px;letter-spacing:0.000px;">2</span>
<svg class="b" style="left:69px;top:961.4px;" width="6" height="16" viewBox="0 0 6 16"><g fill="#111"><circle cx="3" cy="3.0999999999999996" r="1.75"/><circle cx="3" cy="8" r="1.75"/><circle cx="3" cy="12.9" r="1.75"/></g></svg>
<span class="t " style="top:990px;font-size:9.3px;line-height:10px;color:#111;font-weight:700;right:1525.00px;letter-spacing:0.000px;">3</span>
<svg class="b" style="left:69px;top:986.4px;" width="6" height="16" viewBox="0 0 6 16"><g fill="#111"><circle cx="3" cy="3.0999999999999996" r="1.75"/><circle cx="3" cy="8" r="1.75"/><circle cx="3" cy="12.9" r="1.75"/></g></svg>
<div class="b " style="left:79.5px;top:934.2px;width:119.19999999999999px;height:19.59999999999991px;background:#ffffac;"></div>
<div class="b " style="left:219.5px;top:934.2px;width:271.1px;height:19.59999999999991px;background:#ffffac;"></div>
<div class="b " style="left:528.2px;top:934.2px;width:67.09999999999991px;height:19.59999999999991px;background:#ffffac;"></div>
<div class="b " style="left:863.2px;top:934.2px;width:224.5999999999999px;height:19.59999999999991px;background:#ffffac;"></div>
<div class="b " style="left:1090.3px;top:934.2px;width:115.90000000000009px;height:19.59999999999991px;background:#ffffac;"></div>
<div class="b " style="left:1208.7px;top:934.2px;width:33.799999999999955px;height:19.59999999999991px;background:#ffffac;"></div>
<div class="b " style="left:1281px;top:934.2px;width:55.799999999999955px;height:19.59999999999991px;background:#ffffac;"></div>
<div class="b " style="left:1374.5px;top:934.2px;width:39.5px;height:19.59999999999991px;background:#ffffac;"></div>
<div class="b " style="left:1433.3px;top:934.2px;width:39.5px;height:19.59999999999991px;background:#ffffac;"></div>
<div class="b " style="left:1493.2px;top:934.2px;width:8.799999999999955px;height:19.59999999999991px;background:#ffffac;"></div>
<div class="b dots" style="left:597px;top:934px;width:246px;height:20px;background-color:#ffffac;background-image:linear-gradient(90deg,#ffffac 1.67px,rgba(255,255,255,0) 1.67px),linear-gradient(#ffffac 1.67px,#cfcf86 1.67px);"></div>
<div class="b dots" style="left:597px;top:959.5px;width:246px;height:18.5px;"></div>
<svg class="b" style="left:203px;top:940.6px;" width="10" height="6" viewBox="0 0 10 6"><path d="M1.7 1.1 H8.3 L5 4.7 Z" fill="#9a9a9a" stroke="#9a9a9a" stroke-width="0.7" stroke-linejoin="round"/></svg>
<svg class="b" style="left:491.8px;top:935.2px;" width="16" height="16" viewBox="0 0 16 16"><circle cx="7.2" cy="7.2" r="4.5" fill="none" stroke="#8c8c8c" stroke-width="1.7"/><path d="M10.9 11 L13.1 13.2" stroke="#8c8c8c" stroke-width="2.9" stroke-linecap="round"/></svg>
<svg class="b" style="left:512.5px;top:934.4px;" width="6" height="16" viewBox="0 0 6 16"><g fill="#8c8c8c"><circle cx="3" cy="2.5999999999999996" r="1.5"/><circle cx="3" cy="8" r="1.5"/><circle cx="3" cy="13.4" r="1.5"/></g></svg>
<svg class="b" style="left:847px;top:934.4px;" width="6" height="16" viewBox="0 0 6 16"><g fill="#8c8c8c"><circle cx="3" cy="2.5999999999999996" r="1.5"/><circle cx="3" cy="8" r="1.5"/><circle cx="3" cy="13.4" r="1.5"/></g></svg>
<svg class="b" style="left:1244.1px;top:935.2px;" width="16" height="16" viewBox="0 0 16 16"><circle cx="7.2" cy="7.2" r="4.5" fill="none" stroke="#8c8c8c" stroke-width="1.7"/><path d="M10.9 11 L13.1 13.2" stroke="#8c8c8c" stroke-width="2.9" stroke-linecap="round"/></svg>
<svg class="b" style="left:1264.6px;top:934.4px;" width="6" height="16" viewBox="0 0 6 16"><g fill="#8c8c8c"><circle cx="3" cy="2.5999999999999996" r="1.5"/><circle cx="3" cy="8" r="1.5"/><circle cx="3" cy="13.4" r="1.5"/></g></svg>
<svg class="b" style="left:1337.3px;top:935.2px;" width="16" height="16" viewBox="0 0 16 16"><circle cx="7.2" cy="7.2" r="4.5" fill="none" stroke="#8c8c8c" stroke-width="1.7"/><path d="M10.9 11 L13.1 13.2" stroke="#8c8c8c" stroke-width="2.9" stroke-linecap="round"/></svg>
<svg class="b" style="left:1358.2px;top:934.4px;" width="6" height="16" viewBox="0 0 6 16"><g fill="#8c8c8c"><circle cx="3" cy="2.5999999999999996" r="1.5"/><circle cx="3" cy="8" r="1.5"/><circle cx="3" cy="13.4" r="1.5"/></g></svg>
<svg class="b" style="left:1418px;top:940.6px;" width="10" height="6" viewBox="0 0 10 6"><path d="M1.7 1.1 H8.3 L5 4.7 Z" fill="#9a9a9a" stroke="#9a9a9a" stroke-width="0.7" stroke-linejoin="round"/></svg>
<svg class="b" style="left:1477.7px;top:940.6px;" width="10" height="6" viewBox="0 0 10 6"><path d="M1.7 1.1 H8.3 L5 4.7 Z" fill="#9a9a9a" stroke="#9a9a9a" stroke-width="0.7" stroke-linejoin="round"/></svg>
<svg class="b" style="left:203px;top:965.6px;" width="10" height="6" viewBox="0 0 10 6"><path d="M1.7 1.1 H8.3 L5 4.7 Z" fill="#9a9a9a" stroke="#9a9a9a" stroke-width="0.7" stroke-linejoin="round"/></svg>
<svg class="b" style="left:491.8px;top:960.2px;" width="16" height="16" viewBox="0 0 16 16"><circle cx="7.2" cy="7.2" r="4.5" fill="none" stroke="#8c8c8c" stroke-width="1.7"/><path d="M10.9 11 L13.1 13.2" stroke="#8c8c8c" stroke-width="2.9" stroke-linecap="round"/></svg>
<svg class="b" style="left:512.5px;top:959.4px;" width="6" height="16" viewBox="0 0 6 16"><g fill="#8c8c8c"><circle cx="3" cy="2.5999999999999996" r="1.5"/><circle cx="3" cy="8" r="1.5"/><circle cx="3" cy="13.4" r="1.5"/></g></svg>
<svg class="b" style="left:847px;top:959.4px;" width="6" height="16" viewBox="0 0 6 16"><g fill="#8c8c8c"><circle cx="3" cy="2.5999999999999996" r="1.5"/><circle cx="3" cy="8" r="1.5"/><circle cx="3" cy="13.4" r="1.5"/></g></svg>
<svg class="b" style="left:1244.1px;top:960.2px;" width="16" height="16" viewBox="0 0 16 16"><circle cx="7.2" cy="7.2" r="4.5" fill="none" stroke="#8c8c8c" stroke-width="1.7"/><path d="M10.9 11 L13.1 13.2" stroke="#8c8c8c" stroke-width="2.9" stroke-linecap="round"/></svg>
<svg class="b" style="left:1264.6px;top:959.4px;" width="6" height="16" viewBox="0 0 6 16"><g fill="#8c8c8c"><circle cx="3" cy="2.5999999999999996" r="1.5"/><circle cx="3" cy="8" r="1.5"/><circle cx="3" cy="13.4" r="1.5"/></g></svg>
<svg class="b" style="left:1337.3px;top:960.2px;" width="16" height="16" viewBox="0 0 16 16"><circle cx="7.2" cy="7.2" r="4.5" fill="none" stroke="#8c8c8c" stroke-width="1.7"/><path d="M10.9 11 L13.1 13.2" stroke="#8c8c8c" stroke-width="2.9" stroke-linecap="round"/></svg>
<svg class="b" style="left:1358.2px;top:959.4px;" width="6" height="16" viewBox="0 0 6 16"><g fill="#8c8c8c"><circle cx="3" cy="2.5999999999999996" r="1.5"/><circle cx="3" cy="8" r="1.5"/><circle cx="3" cy="13.4" r="1.5"/></g></svg>
<svg class="b" style="left:1418px;top:965.6px;" width="10" height="6" viewBox="0 0 10 6"><path d="M1.7 1.1 H8.3 L5 4.7 Z" fill="#9a9a9a" stroke="#9a9a9a" stroke-width="0.7" stroke-linejoin="round"/></svg>
<svg class="b" style="left:1477.7px;top:965.6px;" width="10" height="6" viewBox="0 0 10 6"><path d="M1.7 1.1 H8.3 L5 4.7 Z" fill="#9a9a9a" stroke="#9a9a9a" stroke-width="0.7" stroke-linejoin="round"/></svg>
<svg class="b" style="left:203px;top:990.6px;" width="10" height="6" viewBox="0 0 10 6"><path d="M1.7 1.1 H8.3 L5 4.7 Z" fill="#9a9a9a" stroke="#9a9a9a" stroke-width="0.7" stroke-linejoin="round"/></svg>
<svg class="b" style="left:491.8px;top:985.2px;" width="16" height="16" viewBox="0 0 16 16"><circle cx="7.2" cy="7.2" r="4.5" fill="none" stroke="#8c8c8c" stroke-width="1.7"/><path d="M10.9 11 L13.1 13.2" stroke="#8c8c8c" stroke-width="2.9" stroke-linecap="round"/></svg>
<svg class="b" style="left:512.5px;top:984.4px;" width="6" height="16" viewBox="0 0 6 16"><g fill="#8c8c8c"><circle cx="3" cy="2.5999999999999996" r="1.5"/><circle cx="3" cy="8" r="1.5"/><circle cx="3" cy="13.4" r="1.5"/></g></svg>
<svg class="b" style="left:826px;top:985.2px;" width="16" height="16" viewBox="0 0 16 16"><circle cx="7.2" cy="7.2" r="4.5" fill="none" stroke="#8c8c8c" stroke-width="1.7"/><path d="M10.9 11 L13.1 13.2" stroke="#8c8c8c" stroke-width="2.9" stroke-linecap="round"/></svg>
<svg class="b" style="left:847px;top:984.4px;" width="6" height="16" viewBox="0 0 6 16"><g fill="#8c8c8c"><circle cx="3" cy="2.5999999999999996" r="1.5"/><circle cx="3" cy="8" r="1.5"/><circle cx="3" cy="13.4" r="1.5"/></g></svg>
<svg class="b" style="left:1244.1px;top:985.2px;" width="16" height="16" viewBox="0 0 16 16"><circle cx="7.2" cy="7.2" r="4.5" fill="none" stroke="#8c8c8c" stroke-width="1.7"/><path d="M10.9 11 L13.1 13.2" stroke="#8c8c8c" stroke-width="2.9" stroke-linecap="round"/></svg>
<svg class="b" style="left:1264.6px;top:984.4px;" width="6" height="16" viewBox="0 0 6 16"><g fill="#8c8c8c"><circle cx="3" cy="2.5999999999999996" r="1.5"/><circle cx="3" cy="8" r="1.5"/><circle cx="3" cy="13.4" r="1.5"/></g></svg>
<svg class="b" style="left:1337.3px;top:985.2px;" width="16" height="16" viewBox="0 0 16 16"><circle cx="7.2" cy="7.2" r="4.5" fill="none" stroke="#8c8c8c" stroke-width="1.7"/><path d="M10.9 11 L13.1 13.2" stroke="#8c8c8c" stroke-width="2.9" stroke-linecap="round"/></svg>
<svg class="b" style="left:1358.2px;top:984.4px;" width="6" height="16" viewBox="0 0 6 16"><g fill="#8c8c8c"><circle cx="3" cy="2.5999999999999996" r="1.5"/><circle cx="3" cy="8" r="1.5"/><circle cx="3" cy="13.4" r="1.5"/></g></svg>
<svg class="b" style="left:1418px;top:990.6px;" width="10" height="6" viewBox="0 0 10 6"><path d="M1.7 1.1 H8.3 L5 4.7 Z" fill="#9a9a9a" stroke="#9a9a9a" stroke-width="0.7" stroke-linejoin="round"/></svg>
<svg class="b" style="left:1477.7px;top:990.6px;" width="10" height="6" viewBox="0 0 10 6"><path d="M1.7 1.1 H8.3 L5 4.7 Z" fill="#9a9a9a" stroke="#9a9a9a" stroke-width="0.7" stroke-linejoin="round"/></svg>
<span class="t " style="top:937px;font-size:12.5px;line-height:14px;color:#111;left:84.00px;letter-spacing:0.240px;">Replacement</span>
<span class="t " style="top:938px;font-size:12.5px;line-height:14px;color:#111;left:223.00px;letter-spacing:-0.349px;">DLSSDM21T</span>
<span class="t " style="top:937px;font-size:12.5px;line-height:14px;color:#111;right:987.20px;letter-spacing:0.022px;">1000</span>
<span class="t " style="top:938px;font-size:12.5px;line-height:14px;color:#6a6a48;left:600.40px;letter-spacing:-0.106px;">DLRTX00276736</span>
<span class="t " style="top:937px;font-size:12.5px;line-height:14px;color:#111;left:867.00px;letter-spacing:-0.081px;">1 TB SSD M.2 M2600</span>
<span class="t " style="top:937px;font-size:12.5px;line-height:14px;color:#111;right:376.20px;letter-spacing:0.000px;">1</span>
<span class="t " style="top:938px;font-size:12.5px;line-height:14px;color:#111;left:1212.60px;letter-spacing:-1.144px;">EA</span>
<span class="t " style="top:938px;font-size:12.5px;line-height:14px;color:#111;left:1284.30px;letter-spacing:-0.274px;">GTA03</span>
<span class="t " style="top:937px;font-size:12.5px;line-height:14px;color:#111;left:1378.50px;letter-spacing:0.108px;">No</span>
<span class="t " style="top:937px;font-size:12.5px;line-height:14px;color:#111;left:1437.30px;letter-spacing:-0.502px;">Yes</span>
<span class="t " style="top:962px;font-size:12.5px;line-height:14px;color:#111;left:84.00px;letter-spacing:0.266px;">Part</span>
<span class="t " style="top:963px;font-size:12.5px;line-height:14px;color:#111;left:223.00px;letter-spacing:-0.315px;">DLAC492</span>
<span class="t " style="top:962px;font-size:12.5px;line-height:14px;color:#111;right:987.20px;letter-spacing:0.022px;">1000</span>
<span class="t " style="top:963px;font-size:12.5px;line-height:14px;color:#6b6b6b;left:600.40px;letter-spacing:-0.106px;">DLRTX00276736</span>
<span class="t" style="left:867px;top:962px;width:217.5px;overflow:hidden;font-size:12.5px;line-height:14px;color:#111;letter-spacing:0.4px;">65-Watt power adapter with a 6-foot cord</span>
<span class="t " style="top:962px;font-size:12.5px;line-height:14px;color:#111;right:376.20px;letter-spacing:0.000px;">1</span>
<span class="t " style="top:963px;font-size:12.5px;line-height:14px;color:#111;left:1212.60px;letter-spacing:-1.144px;">EA</span>
<span class="t " style="top:963px;font-size:12.5px;line-height:14px;color:#111;left:1284.30px;letter-spacing:-0.274px;">GTA03</span>
<span class="t " style="top:962px;font-size:12.5px;line-height:14px;color:#111;left:1378.50px;letter-spacing:0.108px;">No</span>
<span class="t " style="top:962px;font-size:12.5px;line-height:14px;color:#111;left:1437.30px;letter-spacing:0.108px;">No</span>
</main>
</div>
</body></html>
